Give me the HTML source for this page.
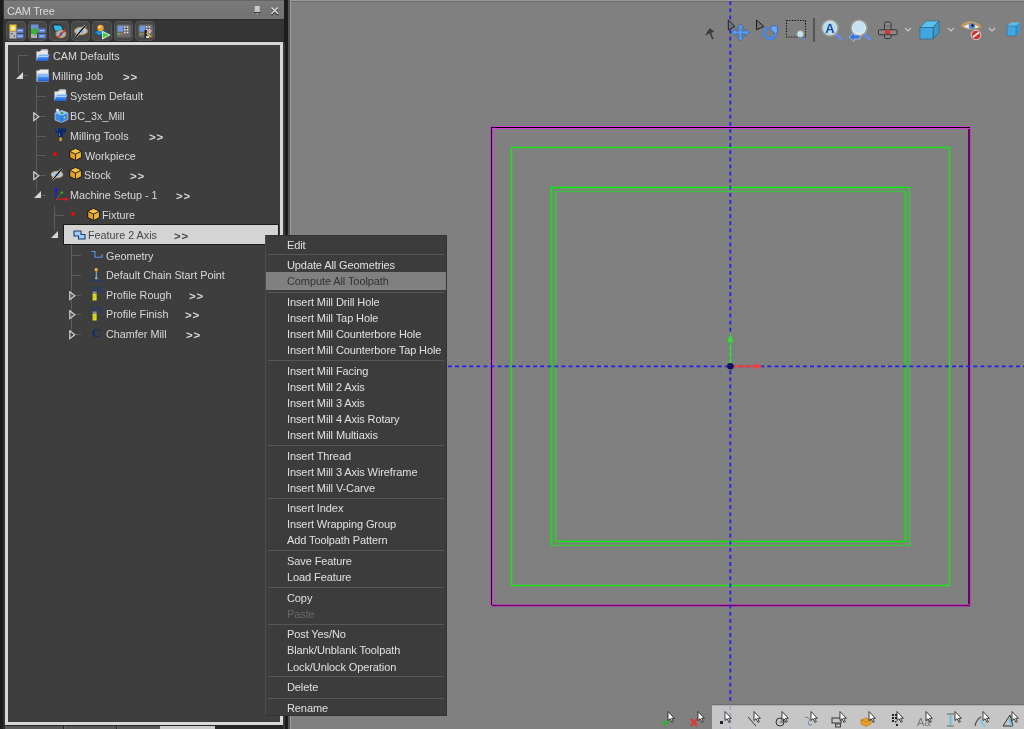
<!DOCTYPE html>
<html><head><meta charset="utf-8">
<style>
*{margin:0;padding:0;box-sizing:border-box}
html,body{width:1024px;height:729px;overflow:hidden;background:#808080;font-family:"Liberation Sans",sans-serif;position:relative}
.a{position:absolute}
#leftblack{left:0;top:0;width:3px;height:729px;background:#1c1c1c}
#panel{left:3px;top:0;width:281px;height:729px;background:#333}
#hdr{left:4px;top:0;width:280px;height:20px;background:linear-gradient(#7a7a7a,#727272);border-top:1px solid #666;border-bottom:1px solid #2e2e2e}
#title{left:7px;top:5px;font-size:11px;letter-spacing:-0.25px;line-height:12px;color:#d8d8d8;white-space:nowrap;will-change:transform}
#tb{left:4px;top:20px;width:280px;height:22px;background:#353535;border-bottom:1px solid #282828}
.btn{top:21px;width:19.5px;height:20px;border:1px solid #555;border-radius:4px;background:#474747}
#tree{left:5px;top:42px;width:278px;height:683px;border:3px solid #d8d8d8;background:#3e3e3e}
#tabs{left:4px;top:725px;width:280px;height:4px;background:#262626}
.tab{position:absolute;top:725.5px;height:3.5px;background:#595959}
.tab{top:726px;height:3px;background:#5a5a5a}
#sepblack{left:283px;top:42px;width:5px;height:687px;background:linear-gradient(90deg,#3a3a3a 0,#3a3a3a 2px,#1c1c1c 2px)}
#sepg{left:288px;top:0;width:2px;height:729px;background:#555}
#sepl{left:290px;top:0;width:1px;height:729px;background:#9a9a9a}
#vtop{left:291px;top:0;width:733px;height:1px;background:#9a9a9a}
#vtop2{left:291px;top:1px;width:733px;height:1px;background:#6c6c6c}
.t{position:absolute;font-size:10.8px;color:#d8d8d8;white-space:nowrap;line-height:12px;will-change:transform}
.sel{color:#464646}
.gt{font-weight:bold;letter-spacing:0.8px;font-size:11.5px;margin-top:1px}
.m{position:absolute;font-size:11px;letter-spacing:-0.1px;color:#e0e0e0;white-space:nowrap;line-height:12px;will-change:transform}
.hl{color:#333}.dis{color:#686868}
#menu{left:265px;top:235px;width:181.5px;height:480.5px;background:#3c3c3c;border:1px solid #333;border-left-color:#4c4c4c}
#mhl{left:266px;top:272px;width:179.5px;height:17.7px;background:#808080}
#selbox{left:63px;top:223.5px;width:216px;height:21.5px;background:#d4d4d4;border:1px solid #1a1a1a}
.ln{position:absolute;background:#5c5c5c}
.sep{position:absolute;left:268px;width:176px;height:1px;background:#565656}
</style></head><body>
<div id="leftblack" class="a"></div>
<div id="panel" class="a"></div>
<div id="hdr" class="a"></div>
<div id="title" class="a">CAM Tree</div>
<div id="tb" class="a"></div>
<div class="a btn" style="left:6px"></div>
<div class="a btn" style="left:27.5px"></div>
<div class="a btn" style="left:49px"></div>
<div class="a btn" style="left:70.5px"></div>
<div class="a btn" style="left:92px"></div>
<div class="a btn" style="left:113.5px"></div>
<div class="a btn" style="left:135px"></div>
<div id="tree" class="a"></div>
<div id="tabs" class="a"></div><div class="tab" style="left:5px;width:58px"></div><div class="tab" style="left:63.5px;width:52px;border-left:1px solid #6a6a6a"></div><div class="tab" style="left:116.5px;width:43.5px;border-left:1px solid #6a6a6a"></div><div class="tab" style="left:160px;width:55px;background:#cacaca"></div>
<div id="sepblack" class="a"></div><div class="a" style="left:284px;top:0;width:4px;height:42px;background:#1c1c1c"></div>
<div id="sepg" class="a"></div>
<div id="sepl" class="a"></div>
<div id="vtop" class="a"></div>
<div id="vtop2" class="a"></div>
<div class="a" id="selbox"></div>
<div class="ln" style="left:18px;top:55px;width:1px;height:18px"></div>
<div class="ln" style="left:18px;top:55px;width:10px;height:1px"></div>
<div class="ln" style="left:23px;top:75px;width:5px;height:1px"></div>
<div class="ln" style="left:36px;top:85px;width:1px;height:106px"></div>
<div class="ln" style="left:36px;top:96px;width:10px;height:1px"></div>
<div class="ln" style="left:36px;top:136px;width:10px;height:1px"></div>
<div class="ln" style="left:36px;top:155px;width:10px;height:1px"></div>
<div class="ln" style="left:39px;top:116px;width:7px;height:1px"></div>
<div class="ln" style="left:39px;top:175px;width:7px;height:1px"></div>
<div class="ln" style="left:41px;top:195px;width:5px;height:1px"></div>
<div class="ln" style="left:54px;top:205px;width:1px;height:26px"></div>
<div class="ln" style="left:54px;top:215px;width:10px;height:1px"></div>
<div class="ln" style="left:71px;top:245px;width:1px;height:86px"></div>
<div class="ln" style="left:71px;top:255px;width:10px;height:1px"></div>
<div class="ln" style="left:71px;top:275px;width:10px;height:1px"></div>
<div class="ln" style="left:76px;top:295px;width:5px;height:1px"></div>
<div class="ln" style="left:76px;top:314px;width:5px;height:1px"></div>
<div class="ln" style="left:76px;top:334px;width:5px;height:1px"></div>
<svg class="a" style="left:16px;top:72px" width="7" height="7"><path d="M0 7 L7 7 L7 0 Z" fill="#d6d6d6"/></svg>
<svg class="a" style="left:34px;top:191px" width="7" height="7"><path d="M0 7 L7 7 L7 0 Z" fill="#d6d6d6"/></svg>
<svg class="a" style="left:51px;top:231px" width="7" height="7"><path d="M0 7 L7 7 L7 0 Z" fill="#d6d6d6"/></svg>
<svg class="a" style="left:32.5px;top:111.5px" width="7" height="10"><path d="M0.8 0.8 L0.8 8.6 L5.8 4.7 Z" fill="none" stroke="#d6d6d6" stroke-width="1.2"/></svg>
<svg class="a" style="left:32.5px;top:171px" width="7" height="10"><path d="M0.8 0.8 L0.8 8.6 L5.8 4.7 Z" fill="none" stroke="#d6d6d6" stroke-width="1.2"/></svg>
<svg class="a" style="left:68.5px;top:290.5px" width="7" height="10"><path d="M0.8 0.8 L0.8 8.6 L5.8 4.7 Z" fill="none" stroke="#d6d6d6" stroke-width="1.2"/></svg>
<svg class="a" style="left:68.5px;top:310px" width="7" height="10"><path d="M0.8 0.8 L0.8 8.6 L5.8 4.7 Z" fill="none" stroke="#d6d6d6" stroke-width="1.2"/></svg>
<svg class="a" style="left:68.5px;top:330px" width="7" height="10"><path d="M0.8 0.8 L0.8 8.6 L5.8 4.7 Z" fill="none" stroke="#d6d6d6" stroke-width="1.2"/></svg>
<div class="t" style="left:53px;top:50px;">CAM Defaults</div>
<div class="t" style="left:52px;top:70px;">Milling Job</div>
<div class="t gt" style="left:123.3px;top:70px;">&gt;&gt;</div>
<div class="t" style="left:69.5px;top:90px;">System Default</div>
<div class="t" style="left:69.5px;top:110px;">BC_3x_Mill</div>
<div class="t" style="left:69.5px;top:130px;">Milling Tools</div>
<div class="t gt" style="left:149px;top:130px;">&gt;&gt;</div>
<div class="t" style="left:85px;top:150px;">Workpiece</div>
<div class="t" style="left:84.2px;top:169px;">Stock</div>
<div class="t gt" style="left:129.5px;top:169px;">&gt;&gt;</div>
<div class="t" style="left:69.9px;top:189px;">Machine Setup - 1</div>
<div class="t gt" style="left:176px;top:189px;">&gt;&gt;</div>
<div class="t" style="left:102.4px;top:209px;">Fixture</div>
<div class="t sel" style="left:88.1px;top:229px;">Feature 2 Axis</div>
<div class="t sel gt" style="left:173.7px;top:229px;">&gt;&gt;</div>
<div class="t" style="left:106.4px;top:250px;">Geometry</div>
<div class="t" style="left:106.4px;top:269px;">Default Chain Start Point</div>
<div class="t" style="left:106.4px;top:289px;">Profile Rough</div>
<div class="t gt" style="left:189.4px;top:289px;">&gt;&gt;</div>
<div class="t" style="left:106.4px;top:308px;">Profile Finish</div>
<div class="t gt" style="left:185px;top:308px;">&gt;&gt;</div>
<div class="t" style="left:106.4px;top:328px;">Chamfer Mill</div>
<div class="t gt" style="left:185.5px;top:328px;">&gt;&gt;</div>
<svg class="a" style="left:253px;top:5px" width="9" height="12" viewBox="0 0 9 12"><rect x="1.8" y="1" width="4.8" height="5.3" fill="#d2d2d2"/><path d="M2.8 1.2 V6 M4.2 1.2 V6 M5.6 1.2 V6" stroke="#bdbdbd" stroke-width="0.4"/><path d="M1.3 6.2 H7.1 L7.4 7 H1 Z" fill="#cfcfcf"/><rect x="1" y="7" width="6.6" height="1.1" fill="#3c3c3c"/><rect x="3.8" y="8.1" width="1" height="1.2" fill="#cfcfcf"/></svg>
<svg class="a" style="left:270px;top:6px" width="10" height="10" viewBox="0 0 10 10"><path d="M1.5 1.5 L8 7.8 M8 1.5 L1.5 7.8" stroke="#3a3a3a" stroke-width="1.3" transform="translate(0,1.4)"/><path d="M1.5 1.5 L8 7.8 M8 1.5 L1.5 7.8" stroke="#dcdcdc" stroke-width="1.2"/></svg>
<svg class="a" style="left:8.5px;top:23.5px" width="16" height="16" viewBox="0 0 16 16"><rect x="0.5" y="0.5" width="7" height="7" fill="#e8c030"/><circle cx="4" cy="4" r="2.2" fill="#f8e8a0"/><rect x="0.5" y="7.5" width="7" height="7" fill="#b8b8b8"/><rect x="2" y="9" width="1.5" height="1.5" fill="#666"/><rect x="4.5" y="11.5" width="1.5" height="1.5" fill="#666"/><rect x="7.5" y="4.5" width="7" height="4.3" fill="#5b7fd8"/><rect x="8.5" y="6" width="5" height="1.2" fill="#a8c0f0"/><rect x="7.5" y="10" width="7" height="4.3" fill="#5b7fd8"/><rect x="8.5" y="11.5" width="5" height="1.2" fill="#a8c0f0"/></svg>
<svg class="a" style="left:29.5px;top:23.5px" width="16" height="16" viewBox="0 0 16 16"><rect x="1" y="0.5" width="7.5" height="6.5" fill="#6a90e0"/><rect x="1" y="8" width="6" height="6" fill="#b0b0b0"/><path d="M1 5 H4.5 V2.5 L8.8 7.5 L4.5 12.5 V10 H1 Z" fill="#3cb030"/><rect x="8.5" y="4.5" width="7" height="4.3" fill="#5b7fd8"/><rect x="9.5" y="6" width="5" height="1.2" fill="#a8c0f0"/><rect x="8.5" y="10" width="7" height="4.3" fill="#5b7fd8"/><rect x="9.5" y="11.5" width="5" height="1.2" fill="#a8c0f0"/></svg>
<svg class="a" style="left:52px;top:24px" width="16" height="16" viewBox="0 0 16 16"><path d="M0.5 1 L9 1 L11.5 6 L3 7.5 Z" fill="#30b8e8" stroke="#111" stroke-width="0.8"/><path d="M3 7.5 L11.5 6 L12 8 L4 9.5Z" fill="#1a80b0"/><ellipse cx="9" cy="10" rx="4.8" ry="3.6" fill="#9ab8d0" stroke="#c09050" stroke-width="1.3"/><circle cx="9" cy="10" r="1.4" fill="#3050a0"/><path d="M5.5 14 L13.5 5.5" stroke="#d03030" stroke-width="1.4"/></svg>
<svg class="a" style="left:72.5px;top:24px" width="16" height="15" viewBox="0 0 16 15"><ellipse cx="8" cy="7" rx="6.3" ry="3.6" fill="#a8c8e0" stroke="#c09a50" stroke-width="1.3"/><circle cx="8" cy="7" r="1.8" fill="#4070b0"/><path d="M3 12.5 L12.5 1.5" stroke="#fff" stroke-width="2.4"/><path d="M3 12.5 L12.5 1.5" stroke="#000" stroke-width="1.3"/></svg>
<svg class="a" style="left:92.5px;top:23.5px" width="18" height="16" viewBox="0 0 18 16"><path d="M1 8 L9 5.5 L14 8.5 L6 11.5 Z" fill="#1e90d0" stroke="#0a4a80" stroke-width="0.6"/><circle cx="7.5" cy="4" r="3.2" fill="#f0a030"/><circle cx="6.6" cy="3" r="1.2" fill="#ffd890"/><path d="M9.5 7.5 L17 11 L9.5 15 Z" fill="#40d040" stroke="#fff" stroke-width="0.8"/></svg>
<svg class="a" style="left:116px;top:24px" width="16" height="15" viewBox="0 0 16 15"><rect x="0.5" y="0.5" width="14.5" height="13" rx="2" fill="#6a6a6a" stroke="#5a5a5a" stroke-width="0.5"/><rect x="1.7" y="1.8" width="5.4" height="5.9" fill="#6f98e8"/><rect x="8" y="2.2" width="1.5" height="1.5" fill="#eee"/><rect x="10.8" y="2.2" width="1.5" height="1.5" fill="#eee"/><rect x="8" y="5" width="1.5" height="1.5" fill="#eee"/><rect x="10.8" y="5" width="1.5" height="1.5" fill="#eee"/><rect x="8" y="7.8" width="1.5" height="1.5" fill="#eee"/><rect x="10.8" y="7.8" width="1.5" height="1.5" fill="#eee"/><rect x="1.7" y="9" width="2" height="2" fill="#50c050"/><rect x="4.5" y="9" width="2" height="2" fill="#d06060"/></svg>
<svg class="a" style="left:137.5px;top:24px" width="16" height="16" viewBox="0 0 16 16"><rect x="0.5" y="0.5" width="14.5" height="13" rx="2" fill="#6a6a6a" stroke="#5a5a5a" stroke-width="0.5"/><rect x="1.7" y="1.8" width="5.4" height="5.9" fill="#6f98e8"/><rect x="8" y="2.2" width="1.5" height="1.5" fill="#eee"/><rect x="10.8" y="2.2" width="1.5" height="1.5" fill="#eee"/><rect x="8" y="5" width="1.5" height="1.5" fill="#eee"/><rect x="10.8" y="5" width="1.5" height="1.5" fill="#eee"/><rect x="8" y="7.8" width="1.5" height="1.5" fill="#eee"/><rect x="10.8" y="7.8" width="1.5" height="1.5" fill="#eee"/><rect x="1.7" y="9" width="2" height="2" fill="#50c050"/><rect x="4.5" y="9" width="2" height="2" fill="#d06060"/><path d="M6.5 6 L9 6 L9 13.5 L6.5 14.5Z" fill="#222"/><rect x="9" y="6" width="4.5" height="2" fill="#d8a0b0"/><path d="M8.5 9 L13 13" stroke="#e0c040" stroke-width="1.6"/><rect x="8" y="12" width="3" height="2" fill="#c8d8f0"/><rect x="12.5" y="13" width="1.5" height="1.5" fill="#c03030"/></svg>
<svg width="0" height="0" style="position:absolute"><defs><linearGradient id="gb" x1="0" y1="0" x2="0" y2="1"><stop offset="0" stop-color="#8cc0ff"/><stop offset="0.45" stop-color="#4a90f0"/><stop offset="1" stop-color="#1a5ad8"/></linearGradient><linearGradient id="gw" x1="0" y1="0" x2="0" y2="1"><stop offset="0" stop-color="#f4f4f4"/><stop offset="1" stop-color="#c8c8c8"/></linearGradient></defs></svg>
<svg class="a" style="left:35.8px;top:48.8px" width="14" height="13" viewBox="0 0 14 13"><path d="M0.5 2.5 H4 L5 1 H12 V11.5 H0.5 Z" fill="url(#gw)" stroke="#9a9a9a" stroke-width="0.5"/><rect x="5.5" y="0.3" width="6" height="1.5" fill="#fff" stroke="#888" stroke-width="0.4"/><path d="M3 5.5 H13.5 L11.5 12 H0.3 Z" fill="url(#gb)"/><path d="M2.5 7.5 H12" stroke="#b8d8ff" stroke-width="0.9"/></svg>
<svg class="a" style="left:35.8px;top:69px" width="14" height="13" viewBox="0 0 14 13"><path d="M0.5 1.5 H3 L4 0.5 H12.5 V12.5 H0.5 Z" fill="url(#gw)" stroke="#9a9a9a" stroke-width="0.5"/><rect x="1.5" y="4.8" width="11.5" height="7.5" fill="url(#gb)"/><path d="M2.5 7 H12" stroke="#b8d8ff" stroke-width="0.9"/></svg>
<svg class="a" style="left:53.8px;top:88.8px" width="14" height="13" viewBox="0 0 14 13"><path d="M0.5 2.5 H4 L5 1 H12 V11.5 H0.5 Z" fill="url(#gw)" stroke="#9a9a9a" stroke-width="0.5"/><rect x="5.5" y="0.3" width="6" height="1.5" fill="#fff" stroke="#888" stroke-width="0.4"/><path d="M3 5.5 H13.5 L11.5 12 H0.3 Z" fill="url(#gb)"/><path d="M2.5 7.5 H12" stroke="#b8d8ff" stroke-width="0.9"/></svg>
<svg class="a" style="left:54px;top:107.5px" width="15" height="15" viewBox="0 0 15 15"><path d="M1 5 L8 2.5 L14 5 L14 11.5 L7.5 14.5 L1 12 Z" fill="#3a8ae8" stroke="#d8e8ff" stroke-width="0.6"/><path d="M1 5 L8 2.5 L14 5 L7.5 7.5 Z" fill="#9cc8f8"/><path d="M7.5 7.5 V14.5" stroke="#1a60c0" stroke-width="0.6"/><rect x="2" y="0.8" width="3" height="3" fill="#e0e8ff" transform="rotate(20 3.5 2.3)"/><circle cx="8" cy="5" r="1.3" fill="#30a040"/><circle cx="10.5" cy="9.5" r="1" fill="#e0c040"/></svg>
<svg class="a" style="left:55px;top:128px" width="12" height="14" viewBox="0 0 12 14"><path d="M0.5 0.5 H11 V4.5 H8 V9.5 H3 V4.5 H0.5 Z" fill="#0a2a6a"/><path d="M1.5 1 L2.5 2.5" stroke="#5a90d0" stroke-width="0.7"/><path d="M4.5 5 V8" stroke="#80b0e0" stroke-width="0.6"/><rect x="4.5" y="9.3" width="2.2" height="3.8" fill="#f0a020"/></svg>
<svg class="a" style="left:51.2px;top:149.8px" width="8" height="8" viewBox="0 0 8 8"><path d="M4 0.9 L4.9 3.1 L7.2 4 L4.9 4.9 L4 7.1 L3.1 4.9 L0.8 4 L3.1 3.1 Z" fill="#f00808"/></svg>
<svg class="a" style="left:69.2px;top:147.6px" width="13" height="13" viewBox="0 0 13 13"><path d="M6.5 0.6 L12.3 3.3 L12.3 9.6 L6.5 12.4 L0.7 9.6 L0.7 3.3 Z" fill="#dfa024" stroke="#151515" stroke-width="1"/><path d="M0.9 3.4 L6.5 6.1 L12.1 3.4 L6.5 0.9 Z" fill="#f6c04a"/><path d="M6.9 6.6 L11.8 4 L11.8 9.3 L6.9 11.7Z" fill="#eab23a"/><path d="M0.9 3.4 L6.5 6.1 L12.1 3.4 M6.5 6.1 V12.2" fill="none" stroke="#151515" stroke-width="0.9"/></svg>
<svg class="a" style="left:69.2px;top:167.4px" width="13" height="13" viewBox="0 0 13 13"><path d="M6.5 0.6 L12.3 3.3 L12.3 9.6 L6.5 12.4 L0.7 9.6 L0.7 3.3 Z" fill="#dfa024" stroke="#151515" stroke-width="1"/><path d="M0.9 3.4 L6.5 6.1 L12.1 3.4 L6.5 0.9 Z" fill="#f6c04a"/><path d="M6.9 6.6 L11.8 4 L11.8 9.3 L6.9 11.7Z" fill="#eab23a"/><path d="M0.9 3.4 L6.5 6.1 L12.1 3.4 M6.5 6.1 V12.2" fill="none" stroke="#151515" stroke-width="0.9"/></svg>
<svg class="a" style="left:50px;top:168px" width="14" height="13" viewBox="0 0 14 13"><ellipse cx="7" cy="6.5" rx="5.8" ry="3.3" fill="#a8c8e8" stroke="#c8a060" stroke-width="1.1"/><circle cx="7" cy="6.5" r="1.6" fill="#4a78b0"/><path d="M2.5 11.8 L11.8 1" stroke="#f0f0f0" stroke-width="2.2"/><path d="M2.5 11.8 L11.8 1" stroke="#000" stroke-width="1.2"/></svg>
<svg class="a" style="left:53px;top:187px" width="16" height="15" viewBox="0 0 16 15"><path d="M3 12 V3" stroke="#1818e0" stroke-width="1.3"/><circle cx="3" cy="2.6" r="1.5" fill="#1818e0"/><path d="M3 12 L9.5 5.2" stroke="#20b020" stroke-width="1" stroke-dasharray="1.5 0.8"/><path d="M9.8 4.8 L7.8 5.3 L9.3 6.8Z" fill="#20c020" stroke="#20c020" stroke-width="0.8"/><path d="M3 12.2 H12.5" stroke="#d02020" stroke-width="1.3"/><circle cx="13.3" cy="12.2" r="1.6" fill="#f01818"/></svg>
<svg class="a" style="left:69.1px;top:209.7px" width="8" height="8" viewBox="0 0 8 8"><path d="M4 0.9 L4.9 3.1 L7.2 4 L4.9 4.9 L4 7.1 L3.1 4.9 L0.8 4 L3.1 3.1 Z" fill="#f00808"/></svg>
<svg class="a" style="left:87.2px;top:207.6px" width="13" height="13" viewBox="0 0 13 13"><path d="M6.5 0.6 L12.3 3.3 L12.3 9.6 L6.5 12.4 L0.7 9.6 L0.7 3.3 Z" fill="#dfa024" stroke="#151515" stroke-width="1"/><path d="M0.9 3.4 L6.5 6.1 L12.1 3.4 L6.5 0.9 Z" fill="#f6c04a"/><path d="M6.9 6.6 L11.8 4 L11.8 9.3 L6.9 11.7Z" fill="#eab23a"/><path d="M0.9 3.4 L6.5 6.1 L12.1 3.4 M6.5 6.1 V12.2" fill="none" stroke="#151515" stroke-width="0.9"/></svg>
<svg class="a" style="left:72.5px;top:229.5px" width="13" height="10" viewBox="0 0 13 10"><path d="M1 1 H8 V4.5 H12 V9 H5.5 V6 H1 Z" fill="#a0ccf8" stroke="#1a3a78" stroke-width="1.1" stroke-linejoin="round"/></svg>
<svg class="a" style="left:90px;top:250px" width="14" height="9" viewBox="0 0 14 9"><path d="M1.3 1.5 H5 V7.2 H12 V4" fill="none" stroke="#1a3a80" stroke-width="1.2" transform="translate(0.4,0.5)"/><path d="M1.3 1.5 H5 V7.2 H12 V4" fill="none" stroke="#6a9ad0" stroke-width="1.1"/></svg>
<svg class="a" style="left:89px;top:267px" width="15" height="15" viewBox="0 0 15 15"><path d="M7.3 4 V11" stroke="#7ab0d8" stroke-width="1.1"/><circle cx="7.3" cy="11.2" r="1.3" fill="#7ab0d8"/><circle cx="7.3" cy="2.8" r="1.8" fill="#e09a20"/><circle cx="6.8" cy="2.3" r="0.7" fill="#ffe0a0"/><path d="M1.2 13.4 H13.9" stroke="#1a3a80" stroke-width="1"/></svg>
<svg class="a" style="left:89.5px;top:287px" width="15" height="14" viewBox="0 0 15 14"><path d="M0.5 0.8 H3.5 V3 H7.5 V0.8 H10.5 V5.2 H13.5" fill="none" stroke="#1a3a8a" stroke-width="1"/><rect x="2.6" y="4.5" width="4" height="2.5" fill="#8a8a8a"/><rect x="2.6" y="7" width="4" height="6.5" fill="#e0e020"/><path d="M3.5 9.5 L5.5 8.5 M3.5 11.5 L5.5 10.5" stroke="#a0a010" stroke-width="0.6"/></svg>
<svg class="a" style="left:89.5px;top:306.6px" width="15" height="14" viewBox="0 0 15 14"><path d="M0.5 0.8 H3.5 V3 H7.5 V0.8 H10.5 V5.2 H13.5" fill="none" stroke="#1a3a8a" stroke-width="1"/><rect x="2.6" y="4.5" width="4" height="2.5" fill="#8a8a8a"/><rect x="2.6" y="7" width="4" height="6.5" fill="#e0e020"/><path d="M3.5 9.5 L5.5 8.5 M3.5 11.5 L5.5 10.5" stroke="#a0a010" stroke-width="0.6"/></svg>
<div class="a" style="left:91.5px;top:326px;font:bold 12px 'Liberation Serif',serif;color:#0a2a70;will-change:transform;line-height:14px">C</div>

<div class="a" id="menu"></div>
<div class="a" id="mhl"></div>
<div class="sep" style="top:253.5px"></div>
<div class="sep" style="top:291.5px"></div>
<div class="sep" style="top:359.5px"></div>
<div class="sep" style="top:444.5px"></div>
<div class="sep" style="top:497.5px"></div>
<div class="sep" style="top:549.5px"></div>
<div class="sep" style="top:586.5px"></div>
<div class="sep" style="top:623.5px"></div>
<div class="sep" style="top:675.5px"></div>
<div class="sep" style="top:697.5px"></div>
<div class="m" style="left:286.5px;top:239px;">Edit</div>
<div class="m" style="left:286.5px;top:259px;">Update All Geometries</div>
<div class="m hl" style="left:286.5px;top:275px;">Compute All Toolpath</div>
<div class="m" style="left:286.5px;top:296px;">Insert Mill Drill Hole</div>
<div class="m" style="left:286.5px;top:312px;">Insert Mill Tap Hole</div>
<div class="m" style="left:286.5px;top:328px;">Insert Mill Counterbore Hole</div>
<div class="m" style="left:286.5px;top:344px;">Insert Mill Counterbore Tap Hole</div>
<div class="m" style="left:286.5px;top:365px;">Insert Mill Facing</div>
<div class="m" style="left:286.5px;top:381px;">Insert Mill 2 Axis</div>
<div class="m" style="left:286.5px;top:397px;">Insert Mill 3 Axis</div>
<div class="m" style="left:286.5px;top:413px;">Insert Mill 4 Axis Rotary</div>
<div class="m" style="left:286.5px;top:429px;">Insert Mill Multiaxis</div>
<div class="m" style="left:286.5px;top:450px;">Insert Thread</div>
<div class="m" style="left:286.5px;top:466px;">Insert Mill 3 Axis Wireframe</div>
<div class="m" style="left:286.5px;top:482px;">Insert Mill V-Carve</div>
<div class="m" style="left:286.5px;top:502px;">Insert Index</div>
<div class="m" style="left:286.5px;top:518px;">Insert Wrapping Group</div>
<div class="m" style="left:286.5px;top:534px;">Add Toolpath Pattern</div>
<div class="m" style="left:286.5px;top:555px;">Save Feature</div>
<div class="m" style="left:286.5px;top:571px;">Load Feature</div>
<div class="m" style="left:286.5px;top:592px;">Copy</div>
<div class="m dis" style="left:286.5px;top:608px;">Paste</div>
<div class="m" style="left:286.5px;top:628px;">Post Yes/No</div>
<div class="m" style="left:286.5px;top:644px;">Blank/Unblank Toolpath</div>
<div class="m" style="left:286.5px;top:661px;">Lock/Unlock Operation</div>
<div class="m" style="left:286.5px;top:681px;">Delete</div>
<div class="m" style="left:286.5px;top:702px;">Rename</div>

<svg class="a" style="left:0;top:0" width="1024" height="729">
<g shape-rendering="crispEdges">
<path d="M969 127.5 V605.5" fill="none" stroke="#9a5a9a" stroke-width="3"/>
<path d="M969 127.5 V605.5" fill="none" stroke="#6e006e" stroke-width="2"/>
<path d="M970 605.5 H491.5" fill="none" stroke="#a040a0" stroke-width="3"/>
<path d="M970 605.5 H491.5" fill="none" stroke="#680068" stroke-width="1"/>
<path d="M491 605 V127 H970" fill="none" stroke="#d838d8" stroke-width="3"/>
<path d="M491 605 V127 H970" fill="none" stroke="#000" stroke-width="1"/>
</g>
<rect x="511.5" y="147.5" width="438" height="438" fill="none" stroke="#22dd22" stroke-width="1.6"/>
<path d="M551.5 545.5 V187.5 H909.5" fill="none" stroke="#00f000" stroke-width="1.6"/>
<path d="M909.5 187.5 V545.5 H551.5" fill="none" stroke="#40c040" stroke-width="1.6"/>
<path d="M555.5 541.5 V191.5 H905.5" fill="none" stroke="#40c040" stroke-width="1.6"/>
<path d="M905.5 191.5 V541.5 H555.5" fill="none" stroke="#00f000" stroke-width="1.6"/>
<line x1="730.3" y1="0" x2="730.3" y2="729" stroke="#2222e8" stroke-width="1.8" stroke-dasharray="3.8 3.3" stroke-dashoffset="-1.2"/>
<line x1="447" y1="366.4" x2="1024" y2="366.4" stroke="#2222e8" stroke-width="1.6" stroke-dasharray="4 3.1" stroke-dashoffset="-0.9"/>
<line x1="730.4" y1="366" x2="730.4" y2="338" stroke="#30e030" stroke-width="2"/>
<path d="M727.4 342 L730.4 333 L733.4 342 Z" fill="#30e030"/>
<line x1="731" y1="366.3" x2="757" y2="366.3" stroke="#f04040" stroke-width="2"/>
<path d="M755 363.3 L762.6 366.3 L755 369.3 Z" fill="#f04040"/>
<circle cx="730.4" cy="366.3" r="3.3" fill="#101060"/>
</svg>

<svg class="a" style="left:702px;top:21px" width="16" height="21" viewBox="0 0 16 21"><path d="M3 14.5 L7.5 7 L12.5 10.5 Z" fill="#3e3e3e"/><path d="M8 11 L10.8 18" stroke="#3a3a3a" stroke-width="1.6"/><path d="M3.5 2 L6 6" stroke="#6e6e6e" stroke-width="0.8"/></svg>
<svg class="a" style="left:726px;top:18px" width="26" height="25" viewBox="0 0 26 25"><path d="M2.3 2 V12 L9 8.5 Z" fill="#6e7088" stroke="#222" stroke-width="1"/><g fill="#5a9ae8" stroke="#2a5aa8" stroke-width="0.6"><path d="M14.5 6 L18 10 H16 V13 H19 V11 L23.5 14.5 L19 18 V16 H16 V19 H18 L14.5 23 L11 19 H13 V16 H10 V18 L5.5 14.5 L10 11 V13 H13 V10 H11 Z"/></g></svg>
<svg class="a" style="left:754px;top:18px" width="26" height="25" viewBox="0 0 26 25"><path d="M2.5 2 V11.8 L10 8.5 Z" fill="#707070" stroke="#1e1e1e" stroke-width="1"/><path d="M13.7 10 A5.6 5.6 0 1 0 20.3 11.5" fill="none" stroke="#3f7fe0" stroke-width="3" stroke-linecap="round"/><path d="M17 8 H23.5 V14.5 L21.5 15.5 L17 12 Z" fill="#6aa8f0" stroke="#2a60c0" stroke-width="0.7"/><path d="M13.7 10 A5.6 5.6 0 1 0 20.3 11.5" fill="none" stroke="#8ac0f8" stroke-width="0.7" opacity="0.5"/></svg>
<svg class="a" style="left:785px;top:19px" width="24" height="24" viewBox="0 0 24 24"><rect x="1.5" y="1.5" width="19" height="16.5" fill="none" stroke="#111" stroke-width="1.1" stroke-dasharray="1.3 1.4"/><path d="M17.5 18 L20.5 21" stroke="#5a80d0" stroke-width="2.4"/><circle cx="15.2" cy="15" r="3.3" fill="#c8e4f0" stroke="#a8a8a8" stroke-width="1"/></svg>
<div class="a" style="left:813px;top:18px;width:2px;height:24px;background:#555"></div>
<svg class="a" style="left:820px;top:18px" width="24" height="25" viewBox="0 0 24 25"><path d="M16 16 L21 21" stroke="#6a8ad8" stroke-width="3.4" stroke-linecap="round"/><circle cx="10" cy="10" r="8" fill="#d0e6f0" stroke="#a0a0a0" stroke-width="1.6"/><circle cx="10" cy="10" r="6.5" fill="#b8dcf0"/><text x="10" y="15" font-family="Liberation Sans" font-weight="bold" font-size="13" text-anchor="middle" fill="#1a4a9a">A</text></svg>
<svg class="a" style="left:848px;top:18px" width="24" height="25" viewBox="0 0 24 25"><path d="M17 16 L21.5 21" stroke="#6a8ad8" stroke-width="3.4" stroke-linecap="round"/><circle cx="11" cy="10" r="8" fill="#d8e8f0" stroke="#9a9a9a" stroke-width="1.6"/><circle cx="11" cy="9" r="5.5" fill="#b8dcf4" opacity="0.6"/><path d="M1 19 L6 14.5 V17 H12 V21 H6 V23.5 Z" fill="#3a7ae0" stroke="#e0e8f8" stroke-width="0.5"/></svg>
<svg class="a" style="left:877px;top:21px" width="22" height="19" viewBox="0 0 22 19"><rect x="7.5" y="1" width="6.5" height="16.5" rx="1.5" fill="#8a8a8a" stroke="#333" stroke-width="1"/><rect x="1.5" y="8.8" width="18.5" height="5" rx="1" fill="#8a8a8a" stroke="#333" stroke-width="1"/><rect x="8" y="9.3" width="5.5" height="4" fill="#e83030"/><path d="M7.5 5 H14 M7.5 13 H14" stroke="#555" stroke-width="0.7"/></svg>
<svg class="a" style="left:904px;top:27px" width="8" height="6" viewBox="0 0 8 6"><path d="M1 1 L4 4 L7 1" fill="none" stroke="#c8c8c8" stroke-width="1.1"/></svg>
<svg class="a" style="left:946.5px;top:27px" width="8" height="6" viewBox="0 0 8 6"><path d="M1 1 L4 4 L7 1" fill="none" stroke="#c8c8c8" stroke-width="1.1"/></svg>
<svg class="a" style="left:988px;top:27px" width="8" height="6" viewBox="0 0 8 6"><path d="M1 1 L4 4 L7 1" fill="none" stroke="#c8c8c8" stroke-width="1.1"/></svg>
<svg class="a" style="left:918px;top:19px" width="24" height="22" viewBox="0 0 24 22"><path d="M2 8.5 L8 2 H21 L15 8.5 Z" fill="#5ac0ec" stroke="#2a5a7a" stroke-width="0.6"/><path d="M15 8.5 L21 2 V14 L15 20 Z" fill="#3a98d0" stroke="#2a5a7a" stroke-width="0.6"/><rect x="2" y="8.5" width="13" height="11.5" fill="#40a8e0" stroke="#2a5a7a" stroke-width="0.6"/></svg>
<svg class="a" style="left:960px;top:20px" width="24" height="21" viewBox="0 0 24 21"><path d="M1.5 6 Q11 -2 21 7" fill="none" stroke="#d0a060" stroke-width="2"/><path d="M2 6.5 Q11 12 20.5 7 Q11 0 2 6.5Z" fill="#e8f0f8" stroke="#c09050" stroke-width="1.2"/><circle cx="12" cy="6" r="3.3" fill="#5a90d0"/><circle cx="12.5" cy="5.5" r="1.3" fill="#111"/><circle cx="16" cy="15" r="4.8" fill="#d03030" stroke="#eee" stroke-width="0.8"/><path d="M13 17 L19 12.5" stroke="#fff" stroke-width="1.6"/></svg>
<svg class="a" style="left:1003px;top:19px" width="21" height="22" viewBox="0 0 21 22"><path d="M1 10 H17 M9 1 V20" stroke="#e06060" stroke-width="0.9" stroke-dasharray="2 1.5"/><path d="M4 7 L8 3.5 H17 L13 7 Z" fill="#5ac0ec"/><path d="M13 7 L17 3.5 V13 L13 17Z" fill="#3a98d0"/><rect x="4" y="7" width="9" height="10" fill="#40a8e0" stroke="#2a5a7a" stroke-width="0.5"/></svg>
<div class="a" style="left:712px;top:704px;width:312px;height:1px;background:#6e6e6e"></div>
<div class="a" style="left:712px;top:705px;width:312px;height:24px;background:#c6c6c6"></div>
<div class="a" style="left:712px;top:705px;width:312px;height:1px;background:#b0b0b0"></div>
<svg class="a" style="left:729px;top:705px" width="3" height="24"><line x1="1.3" y1="0" x2="1.3" y2="24" stroke="#6a6ae8" stroke-width="1.2" stroke-dasharray="3.8 3.3" stroke-dashoffset="-0.6" opacity="0.55"/></svg>
<svg class="a" style="left:654px;top:706px" width="22" height="23" viewBox="0 0 22 23"><path d="M8 15.5 L11 18.5 L17 12.5" fill="none" stroke="#3aa83a" stroke-width="2.4"/><path d="M14 5.5 V14.5 L16.1 12.7 L17.9 16.3 L19.3 15.7 L17.6 12.3 H20.4 Z" fill="#fff" stroke="#111" stroke-width="0.8"/></svg>
<svg class="a" style="left:683.5px;top:706px" width="22" height="23" viewBox="0 0 22 23"><path d="M7 13 L13 20 M13 13 L7 20" stroke="#d83a3a" stroke-width="2.2"/><path d="M14 5.5 V14.5 L16.1 12.7 L17.9 16.3 L19.3 15.7 L17.6 12.3 H20.4 Z" fill="#fff" stroke="#111" stroke-width="0.8"/></svg>
<svg class="a" style="left:711px;top:706px" width="22" height="23" viewBox="0 0 22 23"><rect x="9" y="15" width="3" height="3" fill="#222"/><path d="M14 5.5 V14.5 L16.1 12.7 L17.9 16.3 L19.3 15.7 L17.6 12.3 H20.4 Z" fill="#fff" stroke="#111" stroke-width="0.8"/></svg>
<svg class="a" style="left:739.7px;top:706px" width="22" height="23" viewBox="0 0 22 23"><path d="M8 11 L16 20" stroke="#333" stroke-width="1"/><path d="M14 5.5 V14.5 L16.1 12.7 L17.9 16.3 L19.3 15.7 L17.6 12.3 H20.4 Z" fill="#fff" stroke="#111" stroke-width="0.8"/></svg>
<svg class="a" style="left:768.4px;top:706px" width="22" height="23" viewBox="0 0 22 23"><circle cx="12" cy="16" r="4" fill="none" stroke="#333" stroke-width="1"/><path d="M12 16 H17" stroke="#333" stroke-width="0.8"/><path d="M14 5.5 V14.5 L16.1 12.7 L17.9 16.3 L19.3 15.7 L17.6 12.3 H20.4 Z" fill="#fff" stroke="#111" stroke-width="0.8"/></svg>
<svg class="a" style="left:797.1px;top:706px" width="22" height="23" viewBox="0 0 22 23"><path d="M8 11 Q12 11 13 14 Q10 17 12 19 Q14 20 15 18" fill="none" stroke="#6a8aa8" stroke-width="1"/><path d="M14 5.5 V14.5 L16.1 12.7 L17.9 16.3 L19.3 15.7 L17.6 12.3 H20.4 Z" fill="#fff" stroke="#111" stroke-width="0.8"/></svg>
<svg class="a" style="left:825.8px;top:706px" width="22" height="23" viewBox="0 0 22 23"><rect x="6" y="12" width="9" height="5" fill="none" stroke="#333" stroke-width="1"/><rect x="9.5" y="18" width="5" height="3" fill="none" stroke="#333" stroke-width="0.9"/><path d="M14 5.5 V14.5 L16.1 12.7 L17.9 16.3 L19.3 15.7 L17.6 12.3 H20.4 Z" fill="#fff" stroke="#111" stroke-width="0.8"/></svg>
<svg class="a" style="left:854.5px;top:706px" width="22" height="23" viewBox="0 0 22 23"><path d="M6 14 L11 12 L16 14 V18 L11 20.5 L6 18 Z" fill="#e8a028" stroke="#b07010" stroke-width="0.6"/><path d="M6 14 L11 16 L16 14" fill="none" stroke="#b07010" stroke-width="0.6"/><path d="M14 5.5 V14.5 L16.1 12.7 L17.9 16.3 L19.3 15.7 L17.6 12.3 H20.4 Z" fill="#fff" stroke="#111" stroke-width="0.8"/></svg>
<svg class="a" style="left:883.2px;top:706px" width="22" height="23" viewBox="0 0 22 23"><g fill="#222"><rect x="9" y="8" width="2" height="2"/><rect x="12" y="8" width="2" height="2"/><rect x="9" y="11" width="2" height="2"/><rect x="12" y="11" width="2" height="2"/><rect x="9" y="14" width="2" height="2"/><rect x="12" y="15" width="1.5" height="1.5"/><rect x="13" y="18" width="2" height="2"/></g><path d="M14 5.5 V14.5 L16.1 12.7 L17.9 16.3 L19.3 15.7 L17.6 12.3 H20.4 Z" fill="#fff" stroke="#111" stroke-width="0.8"/></svg>
<svg class="a" style="left:911.9px;top:706px" width="22" height="23" viewBox="0 0 22 23"><text x="5" y="20" font-family="Liberation Sans" font-size="11" fill="#777">Aa</text><path d="M14 5.5 V14.5 L16.1 12.7 L17.9 16.3 L19.3 15.7 L17.6 12.3 H20.4 Z" fill="#fff" stroke="#111" stroke-width="0.8"/></svg>
<svg class="a" style="left:940.6px;top:706px" width="22" height="23" viewBox="0 0 22 23"><path d="M6 8 H13 M6 20 H13" stroke="#666" stroke-width="1.2"/><path d="M9.5 9 V19" stroke="#60c0e8" stroke-width="1.8"/><path d="M14 5.5 V14.5 L16.1 12.7 L17.9 16.3 L19.3 15.7 L17.6 12.3 H20.4 Z" fill="#fff" stroke="#111" stroke-width="0.8"/></svg>
<svg class="a" style="left:969.3px;top:706px" width="22" height="23" viewBox="0 0 22 23"><path d="M6 20 Q7 14 12 11" fill="none" stroke="#444" stroke-width="1.1"/><path d="M11 14 L16 21" stroke="#70c8f0" stroke-width="1.6"/><path d="M14 5.5 V14.5 L16.1 12.7 L17.9 16.3 L19.3 15.7 L17.6 12.3 H20.4 Z" fill="#fff" stroke="#111" stroke-width="0.8"/></svg>
<svg class="a" style="left:998px;top:706px" width="22" height="23" viewBox="0 0 22 23"><path d="M5 20 H15 L12 9 Z" fill="none" stroke="#333" stroke-width="1"/><path d="M11 13 L14 20" stroke="#60c0e8" stroke-width="1.6"/><path d="M14 5.5 V14.5 L16.1 12.7 L17.9 16.3 L19.3 15.7 L17.6 12.3 H20.4 Z" fill="#fff" stroke="#111" stroke-width="0.8"/></svg>

</body></html>
